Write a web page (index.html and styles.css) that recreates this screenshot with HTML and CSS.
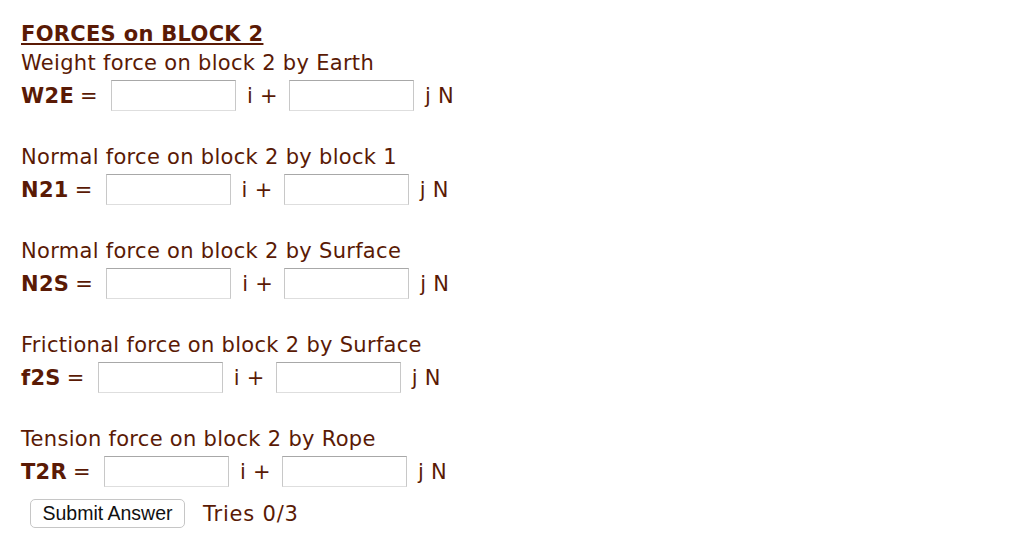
FILE: index.html
```
<!DOCTYPE html>
<html>
<head>
<meta charset="utf-8">
<link rel="stylesheet" href="styles.css">
</head>
<body>
<div class="page">
  <div class="heading">FORCES on BLOCK 2</div>

  <div class="block">
    <div class="desc">Weight force on block 2 by Earth</div>
    <div class="row"><b class="lbl">W2E</b><span class="eq">=</span><input class="box" type="text"><span class="unit">i +</span><input class="box" type="text"><span class="unit">j N</span></div>
  </div>

  <div class="block">
    <div class="desc">Normal force on block 2 by block 1</div>
    <div class="row"><b class="lbl">N21</b><span class="eq">=</span><input class="box" type="text"><span class="unit">i +</span><input class="box" type="text"><span class="unit">j N</span></div>
  </div>

  <div class="block">
    <div class="desc">Normal force on block 2 by Surface</div>
    <div class="row"><b class="lbl">N2S</b><span class="eq">=</span><input class="box" type="text"><span class="unit">i +</span><input class="box" type="text"><span class="unit">j N</span></div>
  </div>

  <div class="block">
    <div class="desc">Frictional force on block 2 by Surface</div>
    <div class="row"><b class="lbl">f2S</b><span class="eq">=</span><input class="box" type="text"><span class="unit">i +</span><input class="box" type="text"><span class="unit">j N</span></div>
  </div>

  <div class="block last">
    <div class="desc">Tension force on block 2 by Rope</div>
    <div class="row"><b class="lbl">T2R</b><span class="eq">=</span><input class="box" type="text"><span class="unit">i +</span><input class="box" type="text"><span class="unit">j N</span></div>
  </div>

  <div class="submit-row">
    <button class="submit" type="button">Submit Answer</button>
    <span class="tries">Tries 0/3</span>
  </div>
</div>
</body>
</html>
```

FILE: styles.css
```
html, body {
  margin: 0;
  padding: 0;
  background: #ffffff;
}

.page {
  padding: 20px 0 0 21px;
  font-family: "DejaVu Sans", Verdana, sans-serif;
  font-size: 21px;
  letter-spacing: 0.3px;
  color: #5a1a05;
}

.heading {
  font-weight: bold;
  text-decoration: underline;
  line-height: 28px;
  height: 28px;
}

.block {
  margin-bottom: 29px;
}

.block.last {
  margin-bottom: 0;
}

.desc {
  line-height: 30px;
  height: 30px;
}

.row {
  display: flex;
  align-items: center;
  height: 35px;
}

.lbl {
  font-weight: bold;
}

.eq {
  margin-left: 6px;
  margin-right: 13px;
}

.unit {
  margin: 0 11px;
}

.box {
  box-sizing: border-box;
  width: 125px;
  height: 31px;
  margin: 0;
  padding: 2px 4px;
  border: 1px solid #c8c8c8;
  border-top-color: #a8a8a8;
  border-bottom-color: #dedede;
  background: #ffffff;
  font-size: 16px;
}

.submit-row {
  display: flex;
  align-items: center;
  margin-top: 10px;
  padding-left: 9px;
}

.submit {
  box-sizing: border-box;
  width: 155px;
  height: 29px;
  padding: 0;
  border: 1px solid #c6c6c6;
  border-radius: 5px;
  background: #ffffff;
  font-family: "Liberation Sans", Arial, sans-serif;
  font-size: 19.5px;
  letter-spacing: 0;
  color: #111111;
}

.tries {
  margin-left: 18px;
  letter-spacing: 0.8px;
}
```
